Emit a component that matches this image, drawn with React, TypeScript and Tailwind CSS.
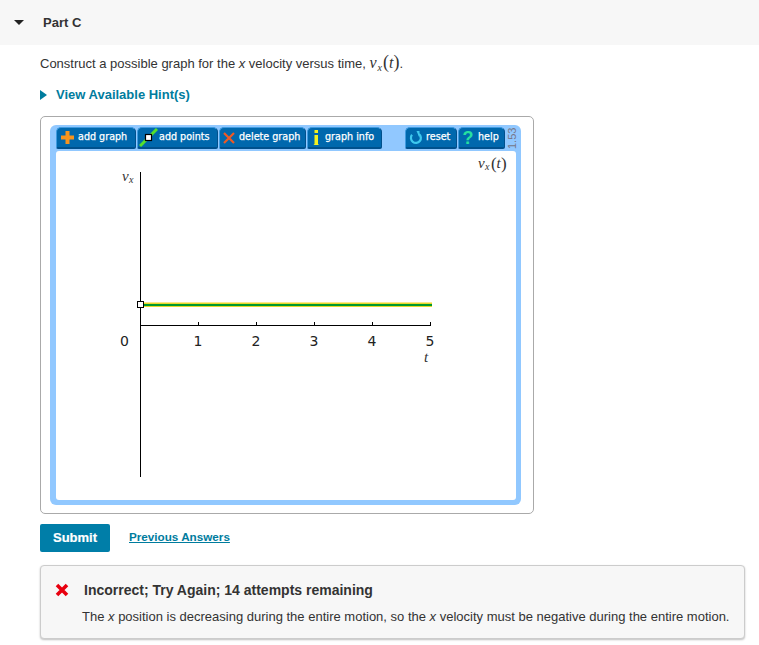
const Btn = ({ icon, label, w, iw }: { icon: React.ReactNode; label: string; w: string; iw: string }) => (
  <div className={`${w} h-[22px] flex items-center rounded-t-[5px] rounded-b-[2px] bg-[#0068ad] border-t border-l border-[#3f9be0] border-b-2 border-b-[#00508c] border-r border-r-[#00508c] font-['DejaVu_Sans',sans-serif] text-[9.6px] text-white whitespace-nowrap`}>
    <span className={`${iw} h-[20px] shrink-0 flex items-center justify-center`}>{icon}</span>
    <span className="ml-[1px] pb-[1px] [-webkit-text-stroke:0.25px_white]">{label}</span>
  </div>
);

const Plus = () => (
  <svg width="13" height="13" viewBox="0 0 13 13"><path d="M4.5 0h4v4.5H13v4H8.5V13h-4V8.5H0v-4h4.5z" fill="#f7941d" /></svg>
);
const Pts = () => (
  <svg width="19" height="19" viewBox="0 0 19 19">
    <path d="M1 18L18 1" stroke="#55e02b" strokeWidth="3" />
    <rect x="6.500" y="6.500" width="6" height="6" fill="#fff" stroke="#000" strokeWidth="1.200" />
  </svg>
);
const Del = () => (
  <svg width="14" height="14" viewBox="0 0 14 14"><path d="M2 2l10 10M12 2L2 12" stroke="#ee5a24" strokeWidth="2.200" /></svg>
);
const Info = () => (
  <svg width="8" height="18" viewBox="0 0 8 18"><path d="M2.500 1h3.500v3H2.500zM2.500 6h3.500v9l1 1H1.500l1-1z" fill="#f4f11e" /></svg>
);
const Reset = () => (
  <svg width="14" height="14" viewBox="0 0 14 14" fill="none">
    <path d="M10 3A5 5 0 1 1 3 3.800" stroke="#3fc8ee" strokeWidth="2.200" />
    <path d="M7.500 0L10.500 0L10.500 7z" fill="#3fc8ee" />
  </svg>
);
const Help = () => <span className="text-[#27e0a0] font-bold text-[18px] leading-none font-['Liberation_Sans',sans-serif]">?</span>;

const Plot = () => (
  <svg width="460" height="349" viewBox="56 151 460 349" className="block">
    <g fontFamily="'Liberation Serif',serif" fontStyle="italic" fill="#333">
      <text x="122" y="181" fontSize="15">v</text>
      <text x="129" y="183" fontSize="10">x</text>
      <text x="478" y="168" fontSize="15">v</text>
      <text x="485" y="170" fontSize="10">x</text>
      <text x="491" y="169" fontSize="17" fontStyle="normal">(</text>
      <text x="496.500" y="168" fontSize="15">t</text>
      <text x="501" y="169" fontSize="17" fontStyle="normal">)</text>
      <text x="424" y="362" fontSize="15">t</text>
    </g>
    <g stroke="#000" strokeWidth="1" shapeRendering="crispEdges">
      <path d="M140.500 172V477" />
      <path d="M140.500 325.500H430.500" />
      <path d="M198.500 322V325M256.500 322V325M314.500 322V325M372.500 322V325M430.500 322V325" />
    </g>
    <rect x="141" y="302" width="291" height="5" fill="#fbe98f" />
    <rect x="141" y="303" width="291" height="4" fill="#e9d92b" />
    <rect x="141" y="304" width="291" height="2" fill="#009a2e" />
    <rect x="137.500" y="301.500" width="6" height="6" fill="#fff" stroke="#000" shapeRendering="crispEdges" />
    <g fontFamily="'DejaVu Sans',sans-serif" fontSize="14" fill="#222" textAnchor="middle">
      <text x="124.500" y="346">0</text>
      <text x="198" y="346">1</text>
      <text x="256" y="346">2</text>
      <text x="314" y="346">3</text>
      <text x="372" y="346">4</text>
      <text x="430" y="346">5</text>
    </g>
  </svg>
);

export default function App() {
  return (
    <div className="w-[759px] h-[645px] overflow-hidden bg-white font-['Liberation_Sans',sans-serif] text-[#333]">
      <div className="h-[45px] bg-[#f7f7f7] flex items-center pl-[14px]">
        <svg width="10" height="5" viewBox="0 0 10 5" className="mr-[19px]"><path d="M0 0h10L5 5z" fill="#222" /></svg>
        <span className="text-[13px] font-bold">Part C</span>
      </div>

      <div className="pl-[40px]">
        <p className="mt-[7px] h-[20px] flex items-baseline text-[13px] leading-[20px] whitespace-nowrap">
          Construct a possible graph for the&nbsp;<i>x</i>&nbsp;velocity versus time,&nbsp;
          <span className="font-['Liberation_Serif',serif] italic text-[16px] leading-[20px]">
            v<span className="relative top-[3px] text-[10px] ml-[1px] mr-[1px]">x</span>
            <span className="not-italic text-[18px]">(</span>t<span className="not-italic text-[18px]">)</span>
          </span>
          <span>.</span>
        </p>

        <div className="mt-[14px] h-[18px] flex items-center">
          <svg width="7" height="10" viewBox="0 0 7 10" className="mr-[9px]"><path d="M0 0l7 5-7 5z" fill="#007c9e" /></svg>
          <span className="text-[13px] font-bold text-[#007c9e]">View Available Hint(s)</span>
        </div>

        <div className="mt-[12px] w-[494px] h-[398px] rounded-[5px] border border-[#aaa] pl-[9px] pt-[8px]">
          <div className="w-[471px] h-[380px] rounded-[6px] bg-[#91c8ff] pl-[6px] pr-[5px] pb-[5px] pt-[2px]">
            <div className="flex items-start">
              <div className="flex gap-[1px]">
                <Btn w="w-[80px]" iw="w-[20px]" icon={<Plus />} label="add graph" />
                <Btn w="w-[81px]" iw="w-[20px]" icon={<Pts />} label="add points" />
                <Btn w="w-[87px]" iw="w-[18px]" icon={<Del />} label="delete graph" />
                <Btn w="w-[75px]" iw="w-[16px]" icon={<Info />} label="graph info" />
              </div>
              <div className="flex gap-[1px] ml-[23px]">
                <Btn w="w-[52px]" iw="w-[19px]" icon={<Reset />} label="reset" />
                <Btn w="w-[47px]" iw="w-[18px]" icon={<Help />} label="help" />
              </div>
              <span className="ml-[2px] h-[22px] w-[11px] flex items-center justify-center text-[11px] text-[#778] [writing-mode:vertical-rl] rotate-180">1.53</span>
            </div>
            <div className="mt-[2px] w-[460px] h-[349px] bg-white rounded-[3px] overflow-hidden">
              <Plot />
            </div>
          </div>
        </div>

        <div className="mt-[10px] flex items-center">
          <div className="w-[70px] h-[28px] rounded-[2px] bg-[#007ea8] flex items-center justify-center text-white text-[13px] font-bold [-webkit-text-stroke:0.2px_white]">Submit</div>
          <span className="ml-[19px] -mt-[2px] text-[11.7px] font-bold text-[#007c9e] underline">Previous Answers</span>
        </div>

        <div className="mt-[13px] w-[705px] h-[74px] rounded-[4px] border border-[#ccc] bg-[#f7f7f7] shadow-[0_1px_2px_rgba(0,0,0,0.25)] pt-[14px]">
          <div className="flex items-center h-[20px] pl-[14px]">
            <svg width="14" height="14" viewBox="0 0 14 14"><path d="M2 2l10 10M12 2L2 12" stroke="#e8000f" strokeWidth="3.600" /></svg>
            <span className="ml-[15px] text-[14px] font-bold">Incorrect; Try Again; 14 attempts remaining</span>
          </div>
          <p className="mt-[7px] ml-[41px] text-[13px] leading-[20px] whitespace-nowrap">
            The <i>x</i> position is decreasing during the entire motion, so the <i>x</i> velocity must be negative during the entire motion.
          </p>
        </div>
      </div>
    </div>
  );
}
